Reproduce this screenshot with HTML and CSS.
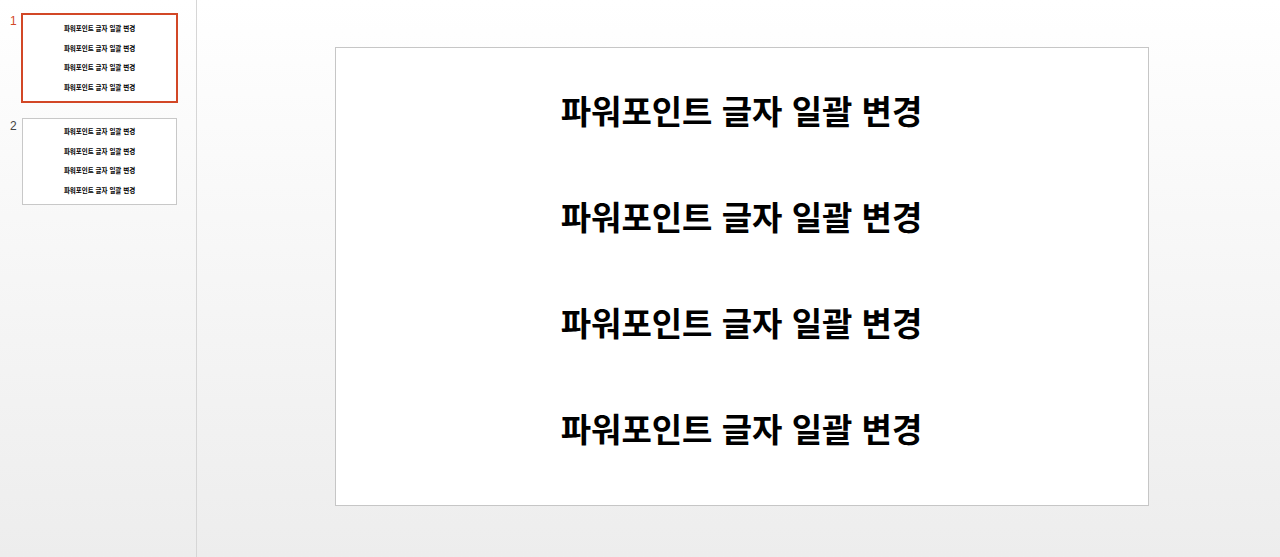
FILE: index.html
```html
<!DOCTYPE html>
<html lang="ko">
<head>
    <meta charset="UTF-8">
    <title>파워포인트 글자 일괄 변경</title>
    <link rel="stylesheet" href="styles.css">
</head>
<body>
    <div class="app">
        <aside class="thumb-pane">
            <div class="thumb-item selected">
                <div class="thumb-num">1</div>
                <div class="thumb">
                    <div class="thumb-line">파워포인트 글자 일괄 변경</div>
                    <div class="thumb-line">파워포인트 글자 일괄 변경</div>
                    <div class="thumb-line">파워포인트 글자 일괄 변경</div>
                    <div class="thumb-line">파워포인트 글자 일괄 변경</div>
                </div>
            </div>
            <div class="thumb-item">
                <div class="thumb-num">2</div>
                <div class="thumb">
                    <div class="thumb-line">파워포인트 글자 일괄 변경</div>
                    <div class="thumb-line">파워포인트 글자 일괄 변경</div>
                    <div class="thumb-line">파워포인트 글자 일괄 변경</div>
                    <div class="thumb-line">파워포인트 글자 일괄 변경</div>
                </div>
            </div>
        </aside>

        <main class="editor">
            <div class="slide">
                <div class="slide-line">파워포인트 글자 일괄 변경</div>
                <div class="slide-line">파워포인트 글자 일괄 변경</div>
                <div class="slide-line">파워포인트 글자 일괄 변경</div>
                <div class="slide-line">파워포인트 글자 일괄 변경</div>
            </div>
        </main>
    </div>
</body>
</html>
```

FILE: styles.css
```css
body {
    margin: 0;
    font-family: "Noto Sans CJK KR", "Noto Sans", sans-serif;
    color: #000;
    background: linear-gradient(180deg, #ffffff 0%, #ededed 100%);
    height: 557px;
    overflow: hidden;
}

.app {
    display: flex;
    height: 557px;
}

/* left slide list */
.thumb-pane {
    width: 197px;
    border-right: 1px solid #d6d6d6;
    padding-top: 13px;
    box-sizing: border-box;
    display: flex;
    flex-direction: column;
    gap: 15px;
}

.thumb-item {
    display: flex;
    align-items: flex-start;
}

.thumb-num {
    width: 22px;
    padding-left: 10px;
    box-sizing: border-box;
    font-family: "Liberation Sans", Arial, sans-serif;
    font-size: 12px;
    line-height: 14px;
    color: #444;
    margin-top: 1px;
}

.thumb {
    width: 155px;
    height: 87px;
    box-sizing: border-box;
    background: #fff;
    border: 1px solid #c8c8c8;
    padding-top: 3px;
    text-align: center;
}

.selected .thumb-num {
    color: #d24726;
    margin-top: 1px;
}

.selected .thumb {
    width: 157px;
    height: 90px;
    margin-left: -1px;
    border: 2px solid #d24726;
    padding-top: 4px;
}

.thumb-line {
    font-size: 6.5px;
    font-weight: 700;
    line-height: 19.5px;
    white-space: nowrap;
}

/* main editing area */
.editor {
    flex: 1;
    display: flex;
    justify-content: center;
    padding-top: 47px;
    padding-left: 6px;
}

.slide {
    width: 814px;
    height: 459px;
    box-sizing: border-box;
    background: #fff;
    border: 1px solid #c6c6c6;
    padding-top: 9px;
    text-align: center;
}

.slide-line {
    font-size: 33px;
    font-weight: 700;
    line-height: 106px;
    white-space: nowrap;
}
```
